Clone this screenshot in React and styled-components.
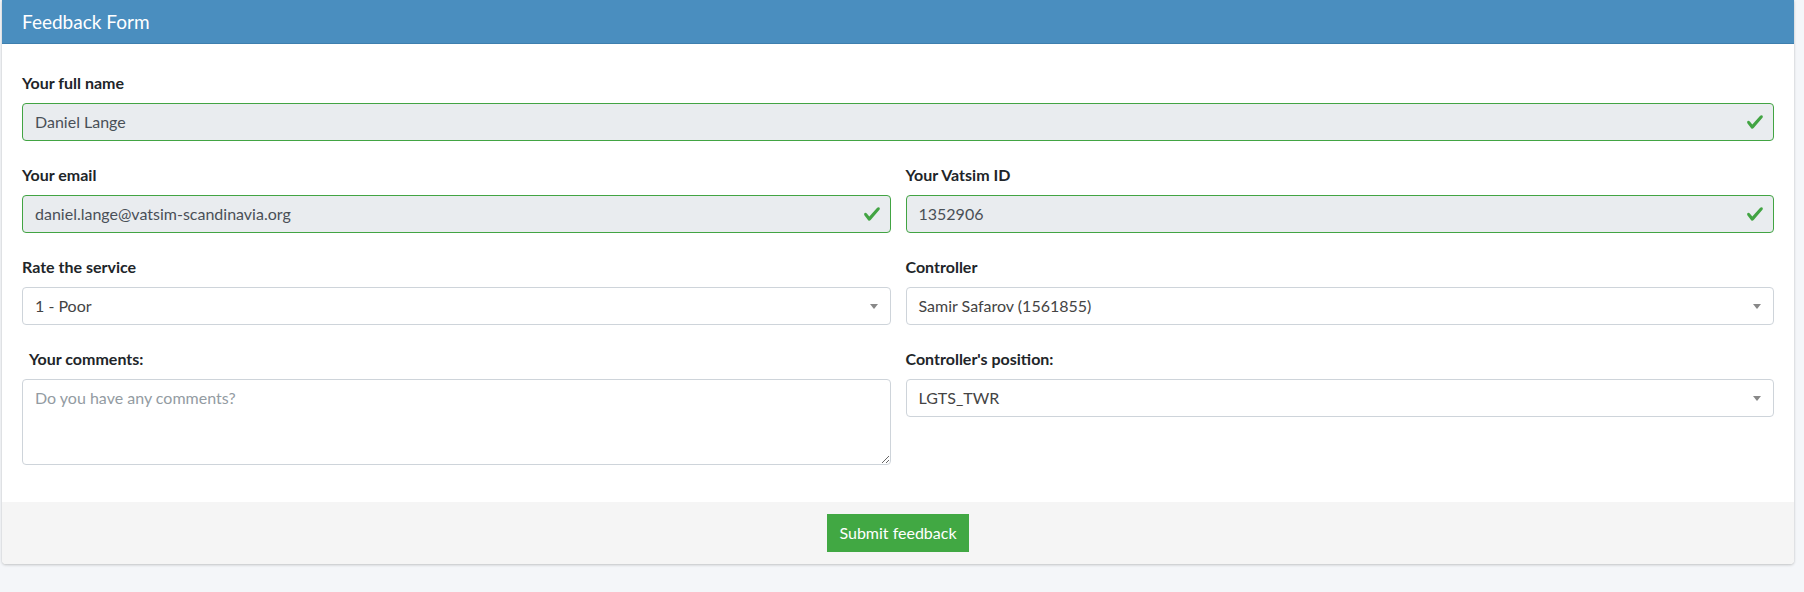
import React from "react";
import styled, { createGlobalStyle } from "styled-components";

const GlobalStyle = createGlobalStyle`
  * { box-sizing: border-box; }
  html, body {
    margin: 0;
    padding: 0;
    background: #f4f6f9;
  }
  body {
    font-family: Lato, "Open Sans", sans-serif;
    font-size: 16px;
    line-height: 1.5;
    color: #212529;
  }
`;

const Page = styled.div`
  min-height: 100vh;
  padding: 0 10px 0 2px;
`;

const Card = styled.section`
  background: #fff;
  border-radius: 0 0 4px 4px;
  box-shadow: 0 0 1px rgba(0, 0, 0, 0.125), 0 1px 3px rgba(0, 0, 0, 0.2);
  overflow: hidden;
`;

const CardHeader = styled.header`
  height: 44px;
  padding: 0 20px;
  display: flex;
  align-items: center;
  background: #4a8ebf;
  border-bottom: 1px solid #3e7fae;
`;

const Title = styled.h3`
  margin: 0;
  font-size: 19px;
  font-weight: 400;
  line-height: 1;
  color: #fff;
`;

const CardBody = styled.form`
  padding: 27px 20px 37px;
  display: grid;
  grid-template-columns: 1fr 1fr;
  column-gap: 15px;
  row-gap: 22px;
  align-items: start;
`;

const Field = styled.div`
  grid-column: ${(p) => (p.$wide ? "1 / -1" : "auto")};
  display: flex;
  flex-direction: column;
`;

const Label = styled.label`
  margin: 0 0 8px ${(p) => p.$indent || 0}px;
  font-weight: 700;
  line-height: 24px;
  color: #212529;
`;

const Control = styled.div`
  height: 38px;
  display: flex;
  align-items: center;
  gap: 8px;
  padding: 0 ${(p) => (p.$valid ? 9 : 12)}px 0 12px;
  border: 1px solid ${(p) => (p.$valid ? "#42a443" : "#ced4da")};
  border-radius: 4px;
  background: ${(p) => (p.$readonly ? "#e9ecef" : "#fff")};
  color: #495057;
`;

const ControlInput = styled.input`
  flex: 1;
  min-width: 0;
  padding: 0;
  border: 0;
  outline: none;
  background: transparent;
  font: inherit;
  color: inherit;
`;

const SelectValue = styled.span`
  flex: 1;
  color: #444;
  white-space: nowrap;
`;

const Caret = styled.span`
  width: 0;
  height: 0;
  border-style: solid;
  border-width: 5px 4px 0 4px;
  border-color: #888 transparent transparent transparent;
`;

const TextArea = styled.textarea`
  height: 86px;
  padding: 6px 12px;
  border: 1px solid #ced4da;
  border-radius: 4px;
  font: inherit;
  line-height: 1.5;
  color: #495057;
  resize: vertical;
  outline: none;
  &::placeholder {
    color: #939ba2;
  }
`;

const CardFooter = styled.footer`
  padding: 12px 20px;
  display: flex;
  justify-content: center;
  background: #f5f5f5;
`;

const SubmitButton = styled.button`
  height: 38px;
  padding: 0 12px;
  border: 0;
  border-radius: 0;
  background: #41a843;
  color: #fff;
  font: inherit;
  cursor: pointer;
`;

const CheckSvg = styled.svg`
  flex: none;
  width: 18px;
  height: 18px;
`;

const ValidCheck = () => (
  <CheckSvg viewBox="0 0 8 8" aria-hidden="true">
    <path
      fill="#42a443"
      d="M2.3 6.73L.6 4.53c-.4-1.04.46-1.4 1.1-.8l1.1 1.4 3.4-3.8c.6-.63 1.6-.27 1.2.7l-4 4.6c-.43.5-.8.4-1.1.1z"
    />
  </CheckSvg>
);

const ReadonlyField = ({ label, value, wide }) => (
  <Field $wide={wide}>
    <Label>{label}</Label>
    <Control $valid $readonly>
      <ControlInput readOnly value={value} />
      <ValidCheck />
    </Control>
  </Field>
);

const SelectField = ({ label, value }) => (
  <Field>
    <Label>{label}</Label>
    <Control>
      <SelectValue>{value}</SelectValue>
      <Caret />
    </Control>
  </Field>
);

export default function App() {
  return (
    <>
      <GlobalStyle />
      <Page>
        <Card>
          <CardHeader>
            <Title>Feedback Form</Title>
          </CardHeader>
          <CardBody onSubmit={(e) => e.preventDefault()}>
            <ReadonlyField wide label="Your full name" value="Daniel Lange" />
            <ReadonlyField
              label="Your email"
              value="daniel.lange@vatsim-scandinavia.org"
            />
            <ReadonlyField label="Your Vatsim ID" value="1352906" />
            <SelectField label="Rate the service" value="1 - Poor" />
            <SelectField label="Controller" value="Samir Safarov (1561855)" />
            <Field>
              <Label $indent={7}>Your comments:</Label>
              <TextArea placeholder="Do you have any comments?" />
            </Field>
            <SelectField label="Controller's position:" value="LGTS_TWR" />
          </CardBody>
          <CardFooter>
            <SubmitButton type="button">Submit feedback</SubmitButton>
          </CardFooter>
        </Card>
      </Page>
    </>
  );
}
